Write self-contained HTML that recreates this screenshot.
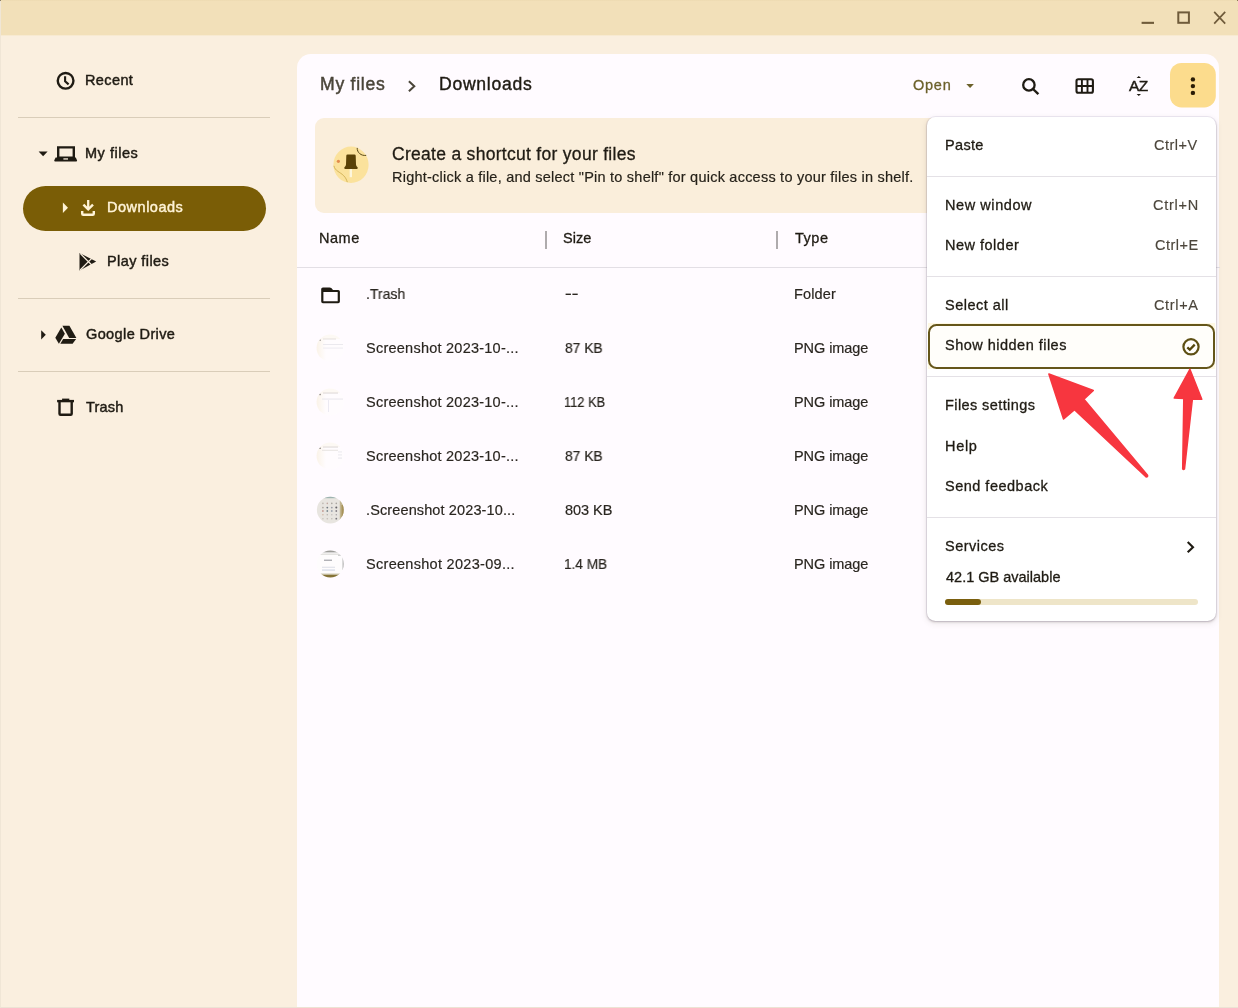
<!DOCTYPE html>
<html>
<head>
<meta charset="utf-8">
<title>Files</title>
<style>
*{box-sizing:border-box;margin:0;padding:0}
html,body{width:1238px;height:1008px;overflow:hidden}
body{position:relative;background:#FAEFDF;font-family:"Liberation Sans",sans-serif;color:#1F1B13}
.abs{position:absolute}
svg{position:absolute;overflow:visible}
.t{position:absolute;white-space:nowrap;line-height:20px;height:20px;color:#1F1B13;will-change:transform}
#titlebar{left:0;top:0;width:1238px;height:36px;background:linear-gradient(#EDDAB1 0,#F2E0B9 1.5px,#F2E0B9 34.6px,#F7E9CE 35.4px,#FAEFDF 36px)}
#frame{left:0;top:0;width:1238px;height:1008px;border-left:1px solid #F0E6D6;border-bottom:1px solid #ECE3D4;pointer-events:none}
#panel{left:297.3px;top:53.7px;width:922.2px;height:954px;background:#FFFBFF;border-radius:14px 14px 0 0}
.sep{position:absolute;height:1px;background:#D9CDB9}
.nav{-webkit-text-stroke:0.45px #1F1B13}
.navsel{color:#FFF3D6;-webkit-text-stroke:0.45px #FFF3D6}
#pill{left:23px;top:186px;width:243px;height:45px;border-radius:23px;background:#7A5D06}
.bc1{color:#4A4539;-webkit-text-stroke:0.45px #4A4539}
.bc2{color:#1F1B13;-webkit-text-stroke:0.4px #1F1B13}
#banner{left:315.3px;top:118px;width:700px;height:94.5px;border-radius:9px;background:#FAEEDB}
.bh{-webkit-text-stroke:0.3px #1F1B13}
.bs{color:#26221A;-webkit-text-stroke:0.18px #26221A}
.th{-webkit-text-stroke:0.3px #1F1B13}
.td{color:#2A2620;-webkit-text-stroke:0.18px #2A2620}
.vsep{position:absolute;width:2px;height:18px;background:#AFABAD;top:231px}
.open{color:#6C612B;-webkit-text-stroke:0.3px #6C612B}
.az{-webkit-text-stroke:0.45px #1F1B13}
#menu{left:927px;top:117px;width:289px;height:504px;background:#FFFFFF;border-radius:8.5px;box-shadow:0 0 0 1px rgba(120,110,160,.13),0 1.5px 2.5px -0.5px rgba(60,50,40,.26),0 2px 6px 1px rgba(60,50,40,.08)}
.mi{-webkit-text-stroke:0.3px #1F1B13}
.sc{color:#4C463C;-webkit-text-stroke:0.15px #4C463C}
.msep{position:absolute;left:927px;width:289px;height:1px;background:#E4E1E6}
</style>
</head>
<body>
<div id="titlebar" class="abs"></div>
<div id="panel" class="abs"></div>
<div id="frame" class="abs"></div>
<div class="abs" style="left:-1.6px;top:-1.8px;width:3px;height:3px;border-radius:50%;background:#3A2A0A"></div>
<div class="abs" style="left:1236.6px;top:-1.8px;width:3px;height:3px;border-radius:50%;background:#3A2A0A"></div>

<!-- SIDEBAR -->
<div class="sep" style="left:18px;top:117px;width:252px"></div>
<div class="sep" style="left:18px;top:298px;width:252px"></div>
<div class="sep" style="left:18px;top:371px;width:252px"></div>
<div id="pill" class="abs"></div>
<svg style="left:0;top:0" width="297" height="450" viewBox="0 0 297 450">
 <!-- clock -->
 <circle cx="65.6" cy="80.8" r="7.85" fill="none" stroke="#1F1B13" stroke-width="2.4"/>
 <path d="M65.1 76.2 V81.3 L68.6 84.4" fill="none" stroke="#1F1B13" stroke-width="2.1" stroke-linejoin="miter"/>
 <!-- caret down -->
 <path d="M38.6 151.6 H47.6 L43.1 156.2 Z" fill="#1F1B13"/>
 <!-- laptop -->
 <path d="M58.2 147.4 H73.8 V157.6 H58.2 Z" fill="none" stroke="#1F1B13" stroke-width="2.4"/>
 <path d="M55.6 157.6 H75.8 L77.1 160.6 Q77.1 161.6 76.2 161.6 H55.1 Q54.2 161.6 54.2 160.6 Z" fill="#1F1B13"/>
 <rect x="63.4" y="158.3" width="4.6" height="1.3" fill="#FAEFDF"/>
 <!-- downloads caret -->
 <path d="M62.9 202.6 L68 207.8 L62.9 213 Z" fill="#FFF3D6"/>
 <!-- download icon -->
 <path d="M88.2 200 V209" fill="none" stroke="#FFF3D6" stroke-width="2.3"/>
 <path d="M83.4 204.6 L88.2 209.4 L93 204.6" fill="none" stroke="#FFF3D6" stroke-width="2.4"/>
 <path d="M82.2 211 V213.7 Q82.2 214.7 83.2 214.7 H92.8 Q93.8 214.7 93.8 213.7 V211" fill="none" stroke="#FFF3D6" stroke-width="2.4"/>
 <!-- play files -->
 <path d="M79.5 253 L96.2 261.6 L79.5 270.4 Z" fill="#1F1B13"/>
 <path d="M80.2 253.4 L92 265.2 M80.2 270 L92 258.1" stroke="#FAEFDF" stroke-width="1.25" fill="none"/>
 <!-- caret right (drive) -->
 <path d="M41.2 330.2 L45.8 334.8 L41.2 339.4 Z" fill="#1F1B13"/>
 <!-- drive -->
 <path d="M62.4 325.8 H69.4 L76.4 338 H69.2 Z" fill="#1F1B13"/>
 <path d="M61.3 327.5 L64.9 333.7 L58.9 343.7 L55.3 337.7 Z" fill="#1F1B13"/>
 <path d="M63.2 338.9 H76.1 L72.6 343.7 H60.3 Z" fill="#1F1B13"/>
 <!-- trash -->
 <path d="M59.5 402 V413.8 Q59.5 414.8 60.5 414.8 H70.7 Q71.7 414.8 71.7 413.8 V402" fill="none" stroke="#1F1B13" stroke-width="2.4"/>
 <path d="M57.1 401.1 H74" stroke="#1F1B13" stroke-width="2.4"/>
 <path d="M62.1 399.5 H69.3" stroke="#1F1B13" stroke-width="1.8"/>
</svg>

<!-- MAIN -->
<div id="banner" class="abs"></div>
<div class="abs" style="left:297px;top:267px;width:923px;height:1px;background:#E3DFE5"></div>
<div class="vsep" style="left:545px"></div>
<div class="vsep" style="left:776px"></div>
<svg style="left:0;top:0" width="1238" height="700" viewBox="0 0 1238 700">
 <!-- breadcrumb chevron -->
 <path d="M408.9 81.2 L414.3 86.2 L408.9 91.2" fill="none" stroke="#4A4539" stroke-width="2"/>
 <!-- pin illustration -->
 <ellipse cx="351" cy="164.8" rx="17.6" ry="18.2" fill="#FBE29C"/>
 <path d="M347.6 154.4 H354.4 Q355.7 154.4 355.7 155.7 L356 164.5 Q356.2 166 357.3 167 Q357.9 167.6 357.7 168.3 Q357.5 168.9 356.8 168.9 H345.2 Q344.5 168.9 344.3 168.3 Q344.1 167.6 344.7 167 Q345.8 166 346 164.5 L346.3 155.7 Q346.3 154.4 347.6 154.4 Z" fill="#5A4206"/>
 <rect x="349.6" y="169" width="2.4" height="8.2" fill="#FDF6DC"/>
 <path d="M357.2 147.9 C357 152.5 361 156 366.2 155.4" fill="none" stroke="#4A3A0A" stroke-width="0.9"/>
 <path d="M333.9 165.8 C335 171 340 172 343.5 175.5 C346 178 346.6 180 347.3 182.1" fill="none" stroke="#C9A847" stroke-width="0.8"/>
 <circle cx="338.4" cy="161.3" r="1.6" fill="#E28B4C"/>
 <!-- open caret -->
 <path d="M966.3 84 H973.9 L970.1 88 Z" fill="#6C612B"/>
 <!-- search -->
 <circle cx="1028.9" cy="84.9" r="5.7" fill="none" stroke="#1F1B13" stroke-width="2.3"/>
 <path d="M1033 89 L1038.4 94.2" stroke="#1F1B13" stroke-width="2.4"/>
 <!-- grid -->
 <rect x="1076.5" y="79.2" width="16.4" height="13.6" rx="1.8" fill="none" stroke="#1F1B13" stroke-width="2.1"/>
 <path d="M1081.9 79.2 V92.8 M1087.5 79.2 V92.8 M1076.5 86 H1092.9" stroke="#1F1B13" stroke-width="1.9" fill="none"/>
 <!-- more button -->
 <rect x="1170" y="63" width="45.8" height="44.4" rx="11.5" fill="#FCDC8D"/>
 <circle cx="1192.9" cy="79.4" r="2.2" fill="#2A1C05"/>
 <circle cx="1192.9" cy="86.1" r="2.2" fill="#2A1C05"/>
 <circle cx="1192.9" cy="92.9" r="2.2" fill="#2A1C05"/>
 <!-- folder icon -->
 <path d="M322.9 287.4 H329.6 Q330.6 287.4 331.3 288.1 L333 289.9 H338.2 Q339.9 289.9 339.9 291.6 V301.6 Q339.9 303.3 338.2 303.3 H322.9 Q321.2 303.3 321.2 301.6 V289.1 Q321.2 287.4 322.9 287.4 Z M323.4 291.9 V301.2 H337.7 V291.9 Z" fill="#1F1B13" fill-rule="evenodd"/>
 <!-- size dashes -->
 <rect x="565.6" y="293.6" width="5.3" height="1.4" fill="#2A2620"/>
 <rect x="572.4" y="293.6" width="5.3" height="1.4" fill="#2A2620"/>
 <!-- window controls -->
 <rect x="1141.6" y="21.8" width="12.4" height="2.1" fill="#6F5B3A"/>
 <rect x="1178.3" y="12.4" width="10.6" height="10.4" fill="none" stroke="#6F5B3A" stroke-width="2"/>
 <path d="M1214.2 11.8 L1225.2 23.6 M1225.2 11.8 L1214.2 23.6" stroke="#6F5B3A" stroke-width="1.7"/>
</svg>
<!-- AZ sort icon -->
<svg style="left:0;top:0" width="1238" height="120" viewBox="0 0 1238 120">
 <path d="M1136.6 78 L1138.8 76 L1141 78 Z M1136.6 94.1 L1138.8 96.1 L1141 94.1 Z" fill="#1F1B13"/>
</svg>
<!-- thumbnails -->
<svg style="left:0;top:0" width="400" height="600" viewBox="0 0 400 600">
 <defs>
  <clipPath id="c1"><circle cx="330.2" cy="348" r="13.6"/></clipPath>
  <clipPath id="c2"><circle cx="330.2" cy="402" r="13.6"/></clipPath>
  <clipPath id="c3"><circle cx="330.2" cy="456" r="13.6"/></clipPath>
  <clipPath id="c5"><circle cx="330.3" cy="510.1" r="13.4"/></clipPath>
  <clipPath id="c6"><circle cx="330.3" cy="564" r="13.5"/></clipPath>
  <linearGradient id="lg" x1="0" x2="1" y1="0" y2="0"><stop offset="0" stop-color="#F6EBD3"/><stop offset="0.2" stop-color="#FCF7EC"/><stop offset="0.34" stop-color="#FFFDFD"/></linearGradient>
 </defs>
 <g clip-path="url(#c1)" opacity=".55">
  <rect x="316" y="334" width="29" height="29" fill="url(#lg)"/>
  <rect x="316" y="334" width="29" height="5" fill="#FAF3E4" opacity=".7"/>
  <rect x="323" y="338.6" width="13" height="0.8" fill="#B9B3A8" opacity=".8"/>
  <rect x="323" y="344" width="20" height="0.9" fill="#D6D6DE"/>
  <rect x="323" y="347.6" width="20" height="0.9" fill="#DCDCE4"/>
  <rect x="319.6" y="339.6" width="1.2" height="1.2" fill="#3A342A"/>
 </g>
 <g clip-path="url(#c2)" opacity=".55">
  <rect x="316" y="388" width="29" height="29" fill="url(#lg)"/>
  <rect x="316" y="388" width="29" height="5" fill="#FAF3E4" opacity=".7"/>
  <rect x="323" y="392.6" width="15" height="0.9" fill="#A9A398" opacity=".8"/>
  <rect x="322" y="398.6" width="21" height="0.9" fill="#D2D2DA"/>
  <rect x="328" y="400" width="0.9" height="12" fill="#DADAE6"/>
  <rect x="319.4" y="393.8" width="1.4" height="1.4" fill="#2A251C"/>
 </g>
 <g clip-path="url(#c3)" opacity=".55">
  <rect x="316" y="442" width="29" height="29" fill="url(#lg)"/>
  <rect x="316" y="442" width="29" height="5" fill="#FAF3E4" opacity=".7"/>
  <rect x="323" y="446.6" width="15" height="0.9" fill="#A9A398" opacity=".8"/>
  <rect x="322" y="449.8" width="16" height="0.9" fill="#CFCBC2"/>
  <rect x="338" y="451.5" width="4" height="0.9" fill="#D6D6DE"/>
  <rect x="338" y="454.5" width="4" height="0.9" fill="#D6D6DE"/>
  <rect x="338" y="457.5" width="4" height="1.2" fill="#DADAE2"/>
  <rect x="319.4" y="447.6" width="1.4" height="1.4" fill="#2A251C"/>
 </g>
 <g clip-path="url(#c5)">
  <rect x="316" y="496" width="29" height="29" fill="#E8E5E0"/>
  <rect x="316" y="496" width="29" height="2.2" fill="#9DB3B0"/>
  <rect x="339.8" y="496" width="6" height="29" fill="#C2B590"/>
  <rect x="341.5" y="505" width="3" height="12" fill="#A8935A"/>
  <g fill="#5B5A60" opacity=".7">
   <circle cx="322.9" cy="503.4" r=".8" fill="#A9A29A"/><circle cx="327.3" cy="503.4" r=".8" fill="#B08D86"/><circle cx="331.8" cy="503.4" r=".8" fill="#8E8A84"/><circle cx="336.3" cy="503.4" r=".8" fill="#8E8A84"/>
   <circle cx="322.9" cy="507.6" r=".9" fill="#9A8F86"/><circle cx="327.3" cy="507.6" r=".9" fill="#3D4A58"/><circle cx="331.8" cy="507.6" r=".9" fill="#7A7F8C"/><circle cx="336.3" cy="507.6" r="1" fill="#2B2A33"/>
   <circle cx="322.9" cy="511" r=".9" fill="#B47C72"/><circle cx="327.3" cy="511" r=".9" fill="#4D6670"/><circle cx="331.8" cy="511" r=".9" fill="#7C8798"/><circle cx="336.3" cy="511" r=".9" fill="#5A5560"/>
   <circle cx="322.9" cy="514.8" r=".8" fill="#C9A58C"/><circle cx="327.3" cy="514.8" r=".8" fill="#A6A19A"/><circle cx="331.8" cy="514.8" r=".8" fill="#B5B0AA"/><circle cx="336.3" cy="514.8" r=".8" fill="#8C8890"/>
   <circle cx="322.9" cy="518.7" r=".8" fill="#B9B4AD"/><circle cx="327.3" cy="518.7" r=".8" fill="#B0AAA3"/><circle cx="331.8" cy="518.7" r=".8" fill="#B0AAA3"/><circle cx="336.3" cy="518.7" r=".9" fill="#4A4852"/>
  </g>
 </g>
 <g clip-path="url(#c6)">
  <rect x="316" y="550" width="29" height="29" fill="#FEFCFD"/>
  <rect x="316" y="550" width="29" height="2.4" fill="#9C9C98"/>
  <rect x="316" y="553.4" width="29" height="1.6" fill="#E4E3E1"/>
  <rect x="316" y="574.4" width="29" height="5" fill="#857336"/>
  <rect x="316" y="573.4" width="29" height="1" fill="#D8D2C0"/>
  <rect x="342.6" y="556" width="1.2" height="14" fill="#A4A4A4"/>
  <rect x="324" y="559.6" width="8" height="1.3" fill="#A9A9AE"/>
  <rect x="322" y="566.8" width="13" height="0.8" fill="#D2D6E2"/>
  <rect x="322" y="569.6" width="13" height="0.9" fill="#C6CCDE"/>
  <rect x="338" y="554.6" width="3" height="1.4" fill="#D0D0D0"/>
 </g>
</svg>

<!-- MENU -->
<div id="menu" class="abs"></div>
<div class="msep" style="top:176px"></div>
<div class="msep" style="top:276px"></div>
<div class="msep" style="top:376px"></div>
<div class="msep" style="top:517px"></div>
<div class="abs" style="left:927.5px;top:323.4px;width:287px;height:46px;background:#FFF9E4"></div>
<div class="abs" style="left:927.5px;top:323.9px;width:287px;height:45px;border:2.2px solid #65561A;border-radius:8.5px;background:#FFFEFA"></div>
<div class="abs" style="left:945px;top:599px;width:253px;height:6px;border-radius:3px;background:#EEE5C8"></div>
<div class="abs" style="left:945px;top:599px;width:36px;height:6px;border-radius:3px;background:#7A5F0E"></div>
<svg style="left:0;top:0" width="1238" height="700" viewBox="0 0 1238 700">
 <circle cx="1191" cy="346.8" r="7.6" fill="none" stroke="#5E5014" stroke-width="2.2"/>
 <path d="M1187.3 347.4 L1189.8 349.7 L1194.7 344.6" fill="none" stroke="#54460C" stroke-width="2.3"/>
 <path d="M1187.7 542.1 L1193 547.2 L1187.7 552.3" fill="none" stroke="#1F1B13" stroke-width="2.1"/>
</svg>

<!-- TEXT -->
<div class="t nav" style="left:85.22px;top:69.98px;font-size:14.5px;letter-spacing:0.387px;">Recent</div>
<div class="t nav" style="left:85.22px;top:142.98px;font-size:14.5px;letter-spacing:0.527px;">My files</div>
<div class="t nav navsel" style="left:107.42px;top:196.98px;font-size:14.5px;letter-spacing:0.514px;">Downloads</div>
<div class="t nav" style="left:107.42px;top:250.98px;font-size:14.5px;letter-spacing:0.416px;">Play files</div>
<div class="t nav" style="left:86.16px;top:324.28px;font-size:14.5px;letter-spacing:0.391px;">Google Drive</div>
<div class="t nav" style="left:86.03px;top:396.98px;font-size:14.5px;letter-spacing:0.173px;">Trash</div>
<div class="t bc1" style="left:319.65px;top:74.00px;font-size:17.6px;letter-spacing:0.725px;">My files</div>
<div class="t bc2" style="left:438.99px;top:74.00px;font-size:17.6px;letter-spacing:0.705px;">Downloads</div>
<div class="t bh" style="left:391.59px;top:144.14px;font-size:17.5px;letter-spacing:0.293px;">Create a shortcut for your files</div>
<div class="t bs" style="left:392.38px;top:166.88px;font-size:14.5px;letter-spacing:0.228px;">Right-click a file, and select &quot;Pin to shelf&quot; for quick access to your files in shelf.</div>
<div class="t th" style="left:319.16px;top:227.98px;font-size:14.5px;letter-spacing:0.525px;">Name</div>
<div class="t th" style="left:563.46px;top:227.98px;font-size:14.5px;letter-spacing:0.069px;">Size</div>
<div class="t th" style="left:795.10px;top:227.98px;font-size:14.5px;letter-spacing:0.526px;">Type</div>
<div class="t td" style="left:365.68px;top:283.98px;font-size:14.5px;letter-spacing:0.000px;transform:scaleX(0.9664);transform-origin:0 0;">.Trash</div>
<div class="t td" style="left:794.18px;top:283.98px;font-size:14.5px;letter-spacing:0.139px;">Folder</div>
<div class="t td" style="left:366.11px;top:337.98px;font-size:14.5px;letter-spacing:0.241px;">Screenshot 2023-10-...</div>
<div class="t td" style="left:564.65px;top:337.98px;font-size:14.5px;letter-spacing:0.000px;transform:scaleX(0.9534);transform-origin:0 0;">87 KB</div>
<div class="t td" style="left:794.18px;top:337.98px;font-size:14.5px;letter-spacing:-0.075px;">PNG image</div>
<div class="t td" style="left:366.11px;top:391.98px;font-size:14.5px;letter-spacing:0.241px;">Screenshot 2023-10-...</div>
<div class="t td" style="left:564.14px;top:391.98px;font-size:14.5px;letter-spacing:0.000px;transform:scaleX(0.8847);transform-origin:0 0;">112 KB</div>
<div class="t td" style="left:794.18px;top:391.98px;font-size:14.5px;letter-spacing:-0.075px;">PNG image</div>
<div class="t td" style="left:366.11px;top:445.98px;font-size:14.5px;letter-spacing:0.241px;">Screenshot 2023-10-...</div>
<div class="t td" style="left:564.65px;top:445.98px;font-size:14.5px;letter-spacing:0.000px;transform:scaleX(0.9534);transform-origin:0 0;">87 KB</div>
<div class="t td" style="left:794.18px;top:445.98px;font-size:14.5px;letter-spacing:-0.075px;">PNG image</div>
<div class="t td" style="left:365.64px;top:499.98px;font-size:14.5px;letter-spacing:0.121px;">.Screenshot 2023-10...</div>
<div class="t td" style="left:564.65px;top:499.98px;font-size:14.5px;letter-spacing:-0.040px;">803 KB</div>
<div class="t td" style="left:794.18px;top:499.98px;font-size:14.5px;letter-spacing:-0.075px;">PNG image</div>
<div class="t td" style="left:366.11px;top:553.98px;font-size:14.5px;letter-spacing:0.295px;">Screenshot 2023-09...</div>
<div class="t td" style="left:564.05px;top:553.98px;font-size:14.5px;letter-spacing:0.000px;transform:scaleX(0.9386);transform-origin:0 0;">1.4 MB</div>
<div class="t td" style="left:794.18px;top:553.98px;font-size:14.5px;letter-spacing:-0.075px;">PNG image</div>
<div class="t open" style="left:912.94px;top:74.68px;font-size:14.5px;letter-spacing:0.747px;">Open</div>
<div class="t az" style="left:1129.15px;top:76.33px;font-size:15.5px;letter-spacing:-0.527px;">AZ</div>
<div class="t mi" style="left:944.96px;top:135.28px;font-size:14.5px;letter-spacing:0.330px;">Paste</div>
<div class="t mi" style="left:944.96px;top:195.18px;font-size:14.5px;letter-spacing:0.570px;">New window</div>
<div class="t mi" style="left:944.96px;top:234.98px;font-size:14.5px;letter-spacing:0.496px;">New folder</div>
<div class="t mi" style="left:945.26px;top:294.78px;font-size:14.5px;letter-spacing:0.489px;">Select all</div>
<div class="t mi" style="left:945.26px;top:334.78px;font-size:14.5px;letter-spacing:0.485px;">Show hidden files</div>
<div class="t mi" style="left:944.96px;top:395.18px;font-size:14.5px;letter-spacing:0.406px;">Files settings</div>
<div class="t mi" style="left:944.96px;top:435.98px;font-size:14.5px;letter-spacing:0.674px;">Help</div>
<div class="t mi" style="left:945.26px;top:475.88px;font-size:14.5px;letter-spacing:0.496px;">Send feedback</div>
<div class="t mi" style="left:945.26px;top:535.98px;font-size:14.5px;letter-spacing:0.478px;">Services</div>
<div class="t mi" style="left:945.58px;top:566.98px;font-size:14.5px;letter-spacing:-0.001px;">42.1 GB available</div>
<div class="t sc" style="left:1153.70px;top:135.28px;font-size:14.5px;letter-spacing:0.502px;">Ctrl+V</div>
<div class="t sc" style="left:1153.30px;top:195.18px;font-size:14.5px;letter-spacing:0.763px;">Ctrl+N</div>
<div class="t sc" style="left:1154.50px;top:234.98px;font-size:14.5px;letter-spacing:0.475px;">Ctrl+E</div>
<div class="t sc" style="left:1153.70px;top:294.78px;font-size:14.5px;letter-spacing:0.644px;">Ctrl+A</div>
<!-- ARROWS -->
<svg style="left:0;top:0" width="1238" height="1008" viewBox="0 0 1238 1008">
 <path d="M1048.9 374 L1093.3 390.5 L1083.9 399.2 L1147.5 475.3 Q1148 476.9 1146.2 477 L1074.5 409.7 L1063.6 418.9 Z" fill="#F7363F" stroke="#F7363F" stroke-width="1.6" stroke-linejoin="round"/>
 <path d="M1189.9 369.3 L1201.8 399.3 L1192.4 399 L1184.5 468.8 Q1183.5 470.3 1182.7 468.8 L1183.8 398.5 L1174.2 398.1 Z" fill="#F7363F" stroke="#F7363F" stroke-width="1.5" stroke-linejoin="round"/>
</svg>

</body>
</html>
